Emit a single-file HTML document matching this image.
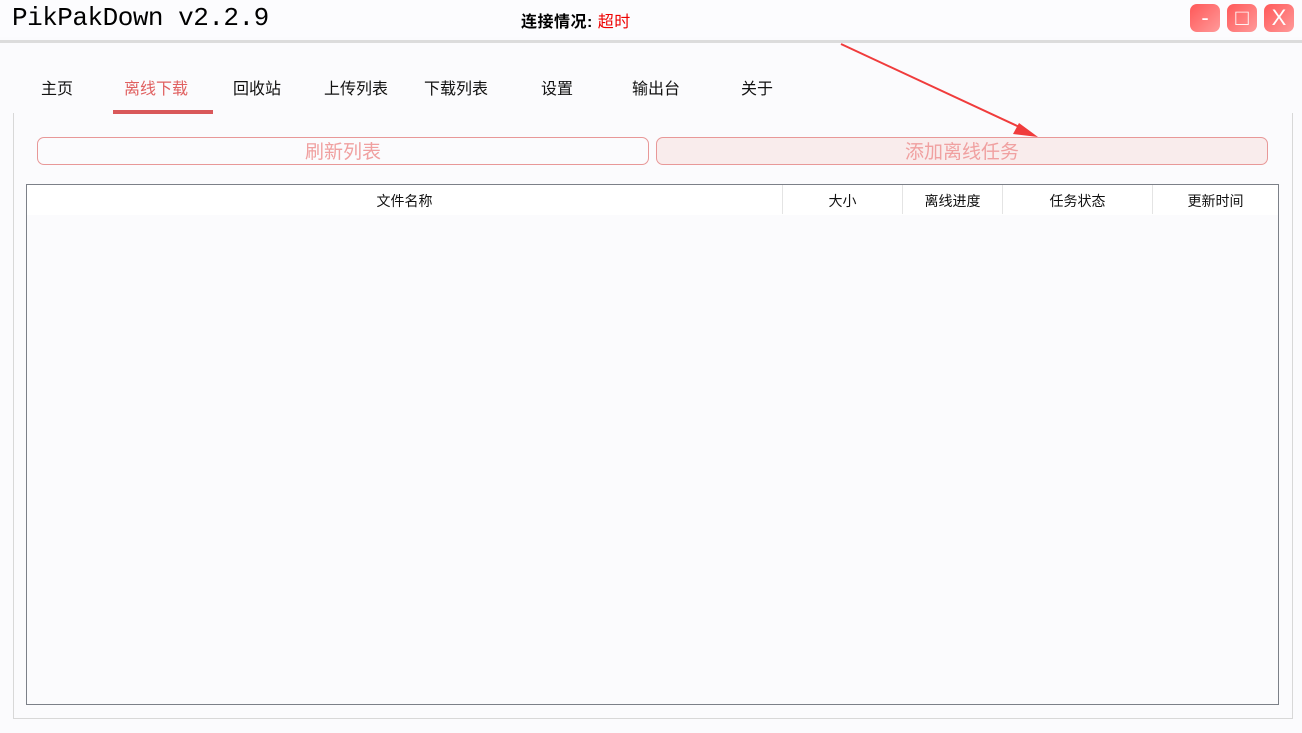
<!DOCTYPE html>
<html><head><meta charset="utf-8"><style>
*{margin:0;padding:0;box-sizing:border-box}
body{width:1302px;height:733px;background:#fbfbfd;position:relative;overflow:hidden;font-family:"Liberation Sans","Noto Sans CJK SC",sans-serif}
.abs{position:absolute}
.title{left:0;top:0;width:1302px;height:37px;background:#fcfcfe}
.tt{left:12px;top:3px;font-family:"Liberation Mono",monospace;font-size:26px;color:#000;letter-spacing:-0.5px}
.conn{left:521px;top:8px;font-size:16px;font-weight:bold;color:#000;letter-spacing:0.5px}
.conn span{color:#e00;font-weight:normal}
.sep{left:0;top:40px;width:1302px;height:3px;background:#dcdcdc}
.wb{top:4px;width:30px;height:28px;border-radius:7px;background:linear-gradient(135deg,#ff5858,#ff9a9a);color:#fff;font-size:22px;text-align:center;line-height:28px}
.tab{top:75px;font-size:16px;color:#111}
.panel{left:13px;top:113px;width:1280px;height:606px;border:1px solid #d8d8d8;border-top:none;background:#fbfbfd}
.ul{left:113px;top:110px;width:100px;height:4px;background:#d9585a}
.btn{top:137px;height:28px;border:1px solid #e89898;border-radius:7px;color:#f0a0a0;font-size:19px;text-align:center;line-height:30px}
.tbl{left:26px;top:184px;width:1253px;height:521px;border:1px solid #7c8088;background:#fbfbfd}
.hd{left:0;top:0;width:1251px;height:30px;background:#fff}
.th{top:0;height:29px;font-size:14px;line-height:32px;text-align:center;color:#111;border-right:1px solid #e4e4e4}
</style></head><body>
<div class="abs title"></div>
<div class="abs tt">PikPakDown v2.2.9</div>
<div class="abs conn">连接情况: <span>超时</span></div>
<div class="abs wb" style="left:1190px">-</div>
<div class="abs wb" style="left:1227px">□</div>
<div class="abs wb" style="left:1264px">X</div>
<div class="abs sep"></div>
<div class="abs panel"></div>
<div class="abs tab" style="left:41px">主页</div>
<div class="abs tab" style="left:124px;color:#e06060">离线下载</div>
<div class="abs tab" style="left:233px">回收站</div>
<div class="abs tab" style="left:324px">上传列表</div>
<div class="abs tab" style="left:424px">下载列表</div>
<div class="abs tab" style="left:541px">设置</div>
<div class="abs tab" style="left:632px">输出台</div>
<div class="abs tab" style="left:741px">关于</div>
<div class="abs ul"></div>
<div class="abs btn" style="left:37px;width:612px;background:#fbfbfd">刷新列表</div>
<div class="abs btn" style="left:656px;width:612px;background:#f9ecec">添加离线任务</div>
<div class="abs tbl">
<div class="abs hd"></div>
<div class="abs th" style="left:0;width:756px">文件名称</div>
<div class="abs th" style="left:756px;width:120px">大小</div>
<div class="abs th" style="left:876px;width:100px">离线进度</div>
<div class="abs th" style="left:976px;width:150px">任务状态</div>
<div class="abs th" style="left:1126px;width:125px;border:none">更新时间</div>
</div>
<svg class="abs" style="left:0;top:0" width="1302" height="733">
<line x1="841" y1="44" x2="1028" y2="131" stroke="#f03c3c" stroke-width="2"/>
<polygon points="1038,137 1019,123 1013,134" fill="#f03c3c"/>
</svg>
</body></html>
